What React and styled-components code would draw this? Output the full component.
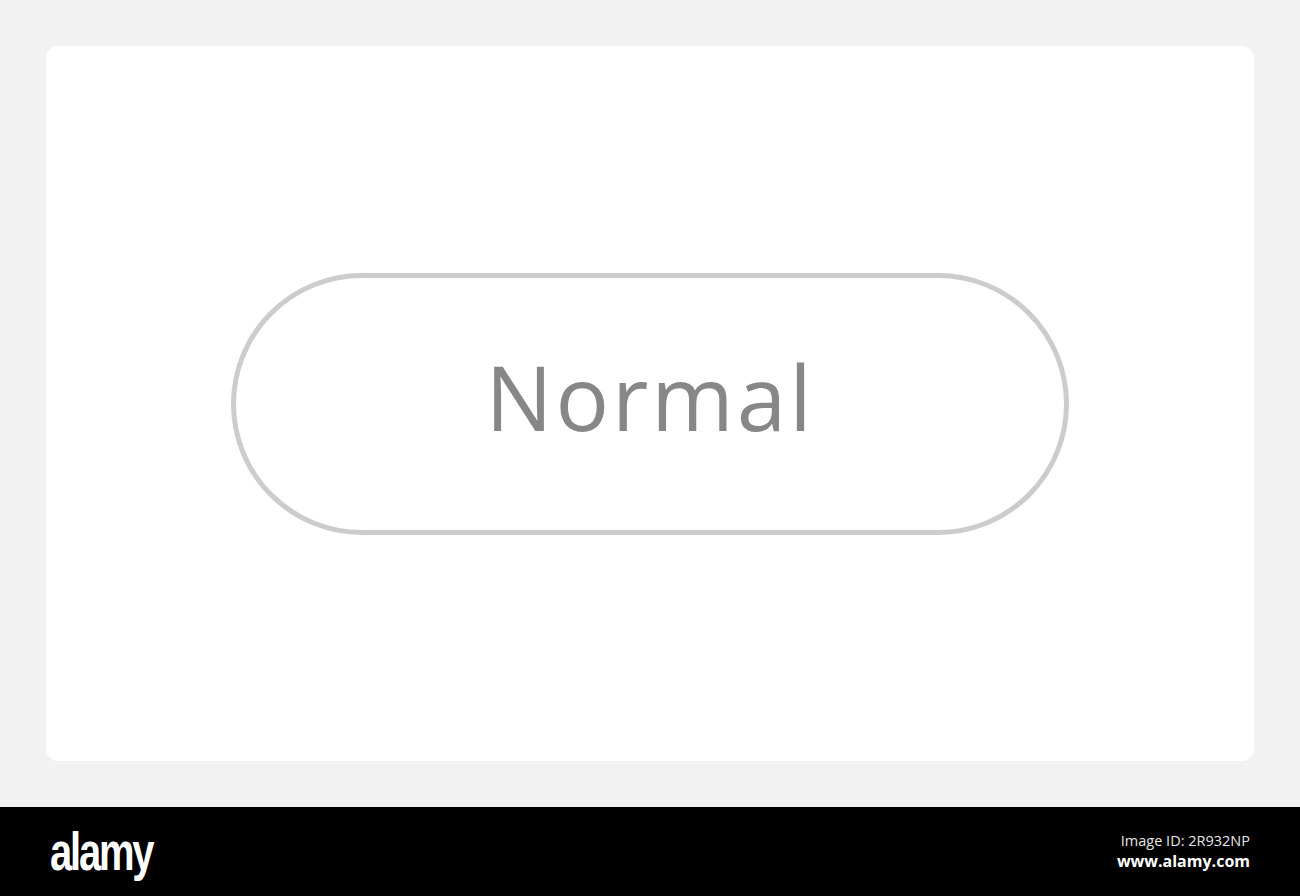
import React from "react";
import styled, { createGlobalStyle } from "styled-components";

const GlobalStyle = createGlobalStyle`
  html, body {
    margin: 0;
    padding: 0;
    background: #f2f2f2;
  }
  * {
    box-sizing: border-box;
  }
`;

const Page = styled.div`
  width: 1300px;
  height: 896px;
  display: flex;
  flex-direction: column;
  background: #f2f2f2;
`;

const Stage = styled.div`
  height: 807px;
  padding: 46px;
`;

const Card = styled.div`
  height: 715px;
  background: #ffffff;
  border-radius: 12px;
  display: flex;
  align-items: center;
  justify-content: center;
`;

const PillButton = styled.button`
  width: 838px;
  height: 262px;
  border: 5px solid #cccccc;
  border-radius: 131px;
  background: #ffffff;
  color: #878787;
  font-family: "Open Sans", "Noto Sans", sans-serif;
  font-size: 89px;
  font-weight: 400;
  letter-spacing: 3px;
  display: flex;
  align-items: center;
  justify-content: center;
  padding: 0 0 14px;
  cursor: pointer;
  &:focus {
    outline: none;
  }
`;

const Footer = styled.footer`
  flex: 1;
  background: #000000;
  display: flex;
  align-items: center;
  justify-content: space-between;
  padding: 0 50px 0 50px;
`;

const Logo = styled.div`
  color: #ffffff;
  font-family: "Liberation Sans", "Open Sans", sans-serif;
  font-weight: 700;
  font-size: 54px;
  letter-spacing: -3px;
  line-height: 1;
  transform: scaleX(0.74);
  transform-origin: left center;
  padding-bottom: 2px;
`;

const Credit = styled.div`
  display: flex;
  flex-direction: column;
  align-items: flex-end;
  gap: 3px;
  font-family: "Open Sans", "Noto Sans", sans-serif;
  color: #ffffff;
`;

const CreditLine = styled.span`
  font-size: ${(p) => (p.$strong ? "16px" : "14.5px")};
  font-weight: ${(p) => (p.$strong ? 700 : 400)};
  color: ${(p) => (p.$strong ? "#ffffff" : "#e6e6e6")};
  line-height: 1.2;
`;

const App = () => {
  return (
    <Page>
      <GlobalStyle />
      <Stage>
        <Card>
          <PillButton>Normal</PillButton>
        </Card>
      </Stage>
      <Footer>
        <Logo>alamy</Logo>
        <Credit>
          <CreditLine>Image ID: 2R932NP</CreditLine>
          <CreditLine $strong>www.alamy.com</CreditLine>
        </Credit>
      </Footer>
    </Page>
  );
};

export default App;
